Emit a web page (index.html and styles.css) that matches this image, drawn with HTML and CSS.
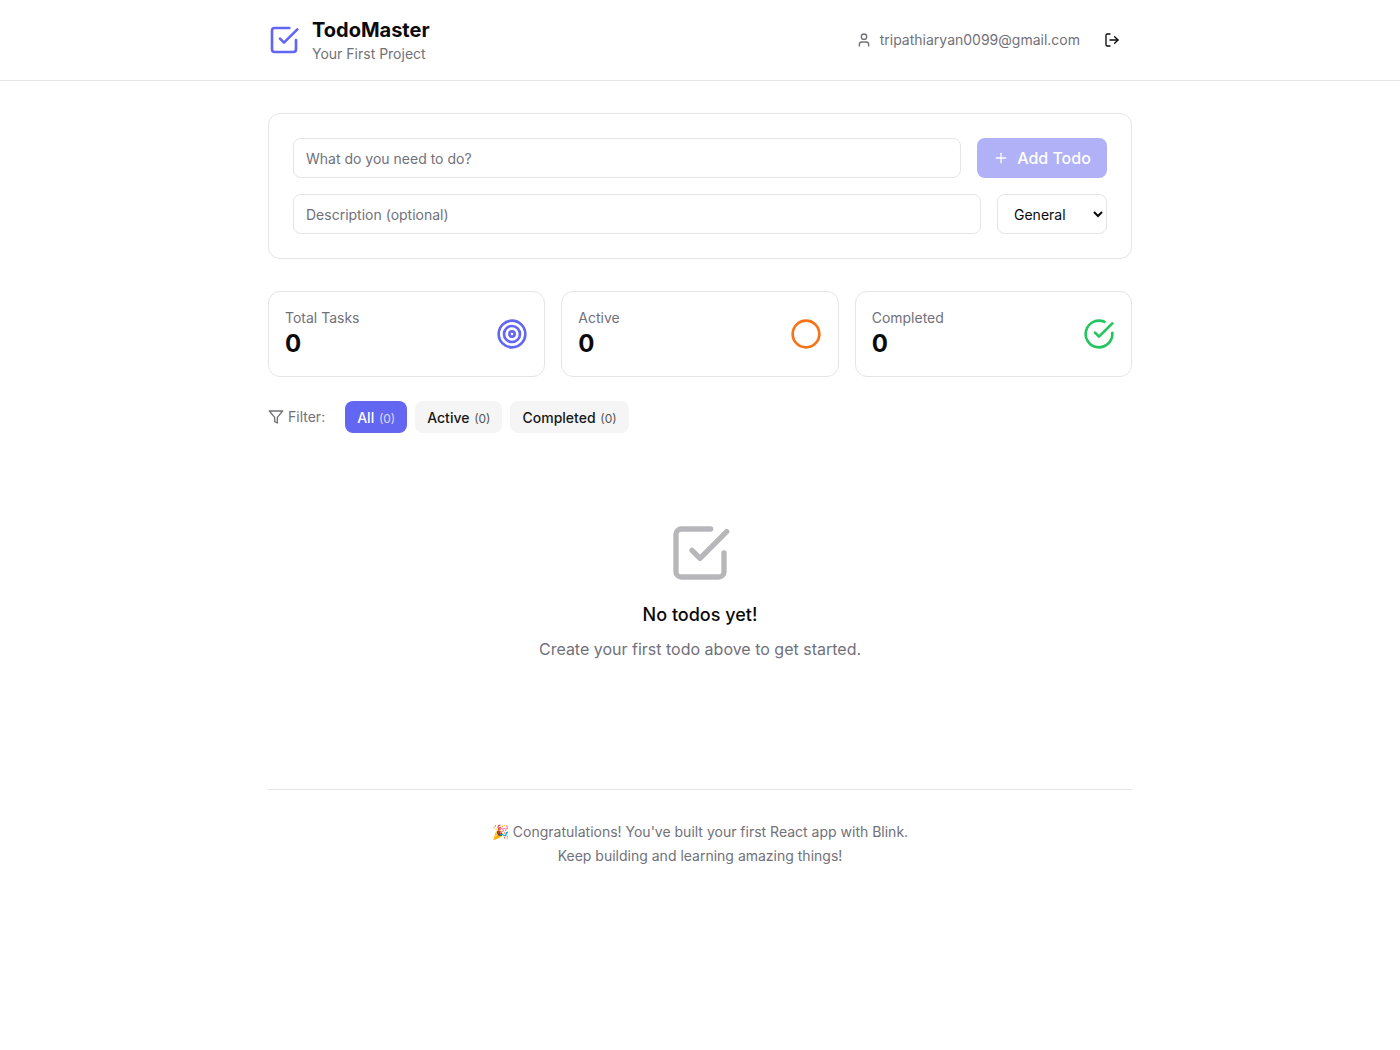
FILE: index.html
```html
<!DOCTYPE html>
<html lang="en">
<head>
<meta charset="utf-8">
<title>TodoMaster</title>
<link rel="stylesheet" href="styles.css">
</head>
<body>
<header class="header">
  <div class="container header-inner">
    <div class="brand">
      <svg class="icon icon-32 c-primary" viewBox="0 0 24 24"><polyline points="9 11 12 14 22 4"/><path d="M21 12v7a2 2 0 0 1-2 2H5a2 2 0 0 1-2-2V5a2 2 0 0 1 2-2h11"/></svg>
      <div>
        <h1 class="brand-title">TodoMaster</h1>
        <p class="brand-sub">Your First Project</p>
      </div>
    </div>
    <div class="user">
      <svg class="icon icon-16" viewBox="0 0 24 24"><path d="M19 21v-2a4 4 0 0 0-4-4H9a4 4 0 0 0-4 4v2"/><circle cx="12" cy="7" r="4"/></svg>
      <span class="user-email">tripathiaryan0099@gmail.com</span>
      <button class="logout" type="button" aria-label="Sign out">
        <svg class="icon icon-16 c-dark" viewBox="0 0 24 24"><path d="M9 21H5a2 2 0 0 1-2-2V5a2 2 0 0 1 2-2h4"/><polyline points="16 17 21 12 16 7"/><line x1="21" y1="12" x2="9" y2="12"/></svg>
      </button>
    </div>
  </div>
</header>
<main class="container main">
  <form class="card form">
    <div class="form-row">
      <input class="field grow" type="text" placeholder="What do you need to do?">
      <button class="add" type="button" disabled>
        <svg class="icon icon-16" viewBox="0 0 24 24"><path d="M5 12h14"/><path d="M12 5v14"/></svg>
        Add Todo
      </button>
    </div>
    <div class="form-row">
      <input class="field grow" type="text" placeholder="Description (optional)">
      <select class="field select"><option>General</option><option>Work</option><option>Personal</option></select>
    </div>
  </form>
  <section class="stats">
    <div class="card stat">
      <div><p class="stat-label">Total Tasks</p><p class="stat-value">0</p></div>
      <svg class="icon icon-32 c-primary" viewBox="0 0 24 24"><circle cx="12" cy="12" r="10"/><circle cx="12" cy="12" r="6"/><circle cx="12" cy="12" r="2"/></svg>
    </div>
    <div class="card stat">
      <div><p class="stat-label">Active</p><p class="stat-value">0</p></div>
      <svg class="icon icon-32 c-orange" viewBox="0 0 24 24"><circle cx="12" cy="12" r="10"/></svg>
    </div>
    <div class="card stat">
      <div><p class="stat-label">Completed</p><p class="stat-value">0</p></div>
      <svg class="icon icon-32 c-green" viewBox="0 0 24 24"><path d="M22 11.08V12a10 10 0 1 1-5.93-9.14"/><polyline points="22 4 12 14.01 9 11.01"/></svg>
    </div>
  </section>
  <div class="filters">
    <div class="filter-label">
      <svg class="icon icon-16" viewBox="0 0 24 24"><polygon points="22 3 2 3 10 12.46 10 19 14 21 14 12.46 22 3"/></svg>
      <span>Filter:</span>
    </div>
    <button class="pill pill-on" type="button">All <span class="count">(0)</span></button>
    <button class="pill" type="button">Active <span class="count">(0)</span></button>
    <button class="pill" type="button">Completed <span class="count">(0)</span></button>
  </div>
  <section class="empty">
    <svg class="icon empty-icon" viewBox="0 0 24 24"><polyline points="9 11 12 14 22 4"/><path d="M21 12v7a2 2 0 0 1-2 2H5a2 2 0 0 1-2-2V5a2 2 0 0 1 2-2h11"/></svg>
    <h2 class="empty-title">No todos yet!</h2>
    <p class="empty-text">Create your first todo above to get started.</p>
  </section>
  <footer class="footer">
    <p>🎉 Congratulations! You've built your first React app with Blink.</p>
    <p class="footer-second">Keep building and learning amazing things!</p>
  </footer>
</main>
</body>
</html>
```
FILE: styles.css
```css
* { box-sizing: border-box; margin: 0; padding: 0; }
body {
  background: #fff;
  color: #0a0a0a;
  font-family: Inter, "Liberation Sans", sans-serif;
  font-size: 16px;
  line-height: 24px;
}
.container { width: 896px; margin: 0 auto; padding-left: 16px; padding-right: 16px; }
.icon {
  display: block;
  flex: none;
  fill: none;
  stroke: #71717a;
  stroke-width: 2;
  stroke-linecap: round;
  stroke-linejoin: round;
}
.icon-16 { width: 16px; height: 16px; }
.icon-32 { width: 32px; height: 32px; }
.c-primary { stroke: #6366f1; }
.c-orange { stroke: #f97316; }
.c-green { stroke: #22c55e; }
.c-dark { stroke: #0a0a0a; }

.header { height: 81px; border-bottom: 1px solid #e5e5e5; }
.header-inner { height: 80px; display: flex; align-items: center; justify-content: space-between; }
.brand { display: flex; align-items: center; gap: 12px; }
.brand-title { font-size: 20px; line-height: 28px; font-weight: 700; }
.brand-sub { font-size: 14px; line-height: 20px; color: #71717a; }
.user { display: flex; align-items: center; gap: 8px; }
.user-email { font-size: 14px; line-height: 20px; color: #71717a; }
.logout {
  display: flex; align-items: center; justify-content: center;
  width: 40px; height: 40px; margin-left: 4px;
  background: none; border: 0; border-radius: 8px;
}

.main { padding-top: 32px; padding-bottom: 32px; }
.card { background: #fff; border: 1px solid #e5e5e5; border-radius: 12px; }
.form { padding: 24px; display: flex; flex-direction: column; gap: 16px; margin-bottom: 32px; }
.form-row { display: flex; gap: 16px; }
.field {
  height: 40px;
  padding: 0 12px;
  background: #fff;
  border: 1px solid #e5e5e5;
  border-radius: 8px;
  font-family: inherit;
  font-size: 14px;
  color: #0a0a0a;
}
.field::placeholder { color: #71717a; opacity: 1; }
.grow { flex: 1; min-width: 0; }
.select { width: 110px; flex: none; }
.add {
  width: 130px; height: 40px; flex: none;
  display: flex; align-items: center; justify-content: center; gap: 8px;
  background: #6366f1; color: #fff;
  border: 0; border-radius: 8px;
  font-family: inherit; font-size: 16px; font-weight: 500;
  opacity: .5;
}
.add .icon { stroke: #fff; }

.stats { display: grid; grid-template-columns: repeat(3, 1fr); gap: 16px; margin-bottom: 24px; }
.stat { padding: 16px; display: flex; align-items: center; justify-content: space-between; }
.stat-label { font-size: 14px; line-height: 20px; color: #71717a; }
.stat-value { font-size: 24px; line-height: 32px; font-weight: 700; }

.filters { display: flex; align-items: center; gap: 8px; margin-bottom: 24px; }
.filter-label { display: flex; align-items: center; gap: 4px; margin-right: 12px; font-size: 14px; line-height: 20px; color: #71717a; }
.pill {
  height: 32px; padding: 0 12px;
  background: #f5f5f5; color: #171717;
  border: 0; border-radius: 8px;
  font-family: inherit; font-size: 14px; font-weight: 500;
}
.pill-on { background: #6366f1; color: #fff; }
.count { font-size: 12px; font-weight: 400; opacity: .75; margin-left: 1px; }

.empty { padding: 64px 0; display: flex; flex-direction: column; align-items: center; }
.empty-icon { width: 64px; height: 64px; opacity: .5; margin-bottom: 16px; }
.empty-title { font-size: 18px; line-height: 28px; font-weight: 500; margin-bottom: 8px; }
.empty-text { color: #71717a; }

.footer { margin-top: 64px; padding-top: 32px; border-top: 1px solid #e5e5e5; text-align: center; font-size: 14px; line-height: 20px; color: #71717a; }
.footer-second { margin-top: 4px; }
```
